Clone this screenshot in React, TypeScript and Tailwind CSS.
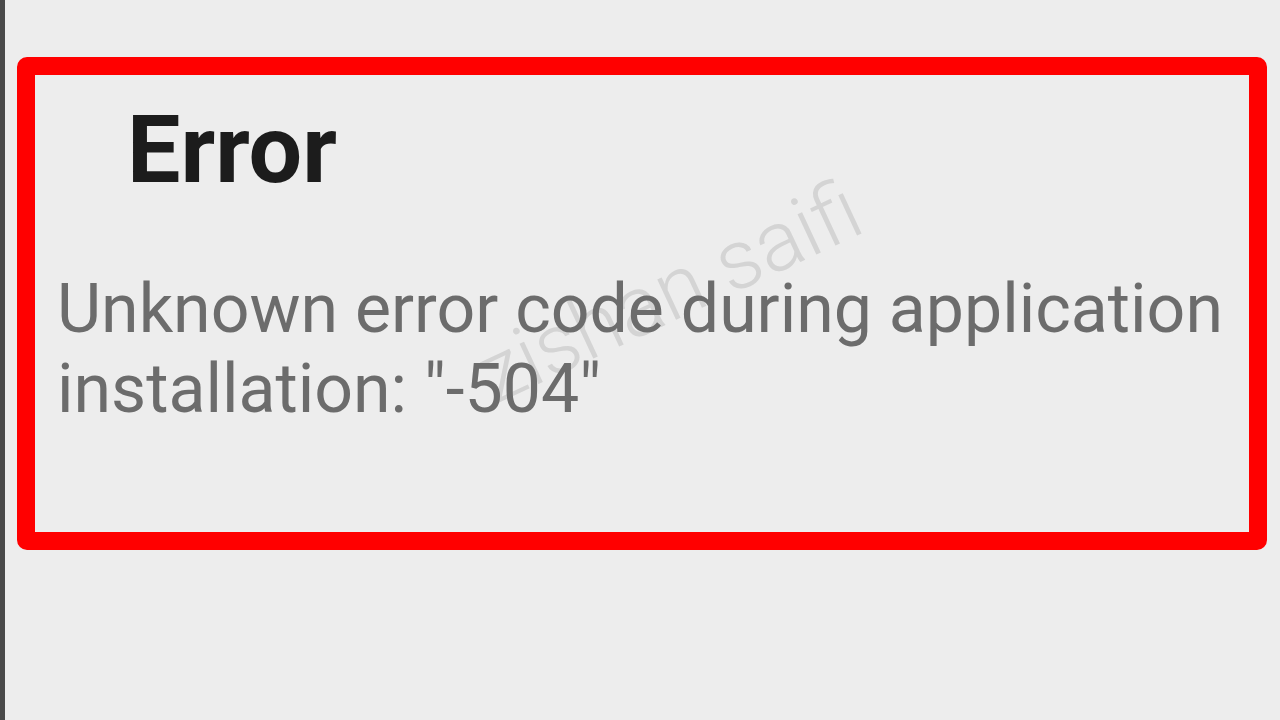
export default function App() {
  return (
    <div className="w-[1280px] h-[720px] bg-[#ededed] flex overflow-hidden" style={{ fontFamily: "Roboto, 'Noto Sans', sans-serif" }}>
      <div className="w-[5px] h-full bg-[#4a4a4a] shrink-0" />
      <div className="flex-1 pl-[12px] pt-[57px]">
        <div className="relative w-[1250px] h-[493px] border-[18px] border-[#ff0000] rounded-[10px] flex flex-col">
          <div className="absolute left-[448px] top-[262px] text-[84px] leading-[84px] font-light text-[#d4d4d4] -rotate-[25deg] origin-left whitespace-nowrap">
            zishan saifi
          </div>
          <div className="relative pl-[92px] mt-[27px] text-[95px] leading-[96px] font-bold text-[#1c1c1c]">Error</div>
          <div className="relative pl-[22px] mt-[71px] text-[68px] leading-[80px] text-[#6c6c6c] font-normal">
            Unknown error code during application
            <br />
            installation: "-504"
          </div>
        </div>
      </div>
    </div>
  );
}
